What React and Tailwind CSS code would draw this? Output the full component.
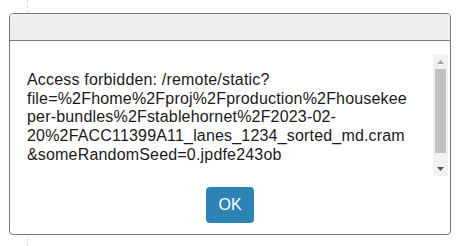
export default function App() {
  const lines = [
    'Access forbidden: /remote/static?',
    'file=%2Fhome%2Fproj%2Fproduction%2Fhousekee',
    'per-bundles%2Fstablehornet%2F2023-02-',
    '20%2FACC11399A11_lanes_1234_sorted_md.cram',
    '&someRandomSeed=0.jpdfe243ob',
  ];

  return (
    <div className="relative w-[465px] h-[246px] bg-white overflow-hidden font-['Liberation_Sans',Arial,sans-serif]">
      {/* dashed guide behind the dialog */}
      <div className="absolute left-[27px] top-0 h-full border-l border-dashed border-[#dddddd]" />

      <div className="relative ml-[9px] mt-[13px] w-[442px] h-[222px] flex flex-col bg-white border border-[#7b7b7b] rounded-[4px]">
        <div className="h-[27px] shrink-0 bg-[#eeeeee] border-b border-[#7b7b7b] rounded-t-[3px]" />

        <div className="mt-[13px] mr-[2px] h-[122px] flex">
          <div className="flex-1 pl-[17px] pt-[17px] text-[16px] tracking-[0.18px] leading-[18.7px] text-[#1a1a1a]">
            {lines.map((line) => (
              <div key={line} className="whitespace-nowrap">{line}</div>
            ))}
          </div>

          <div className="w-[15px] bg-[#f1f1f1] flex flex-col items-center">
            <div className="h-[15px] w-full flex items-center justify-center">
              <svg width="7" height="4" viewBox="0 0 7 4">
                <path d="M3.5 0L7 4H0Z" fill="#a3a3a3" />
              </svg>
            </div>
            <div className="w-[11px] h-[84px] bg-[#c1c1c1]" />
            <div className="flex-1" />
            <div className="h-[15px] w-full flex items-center justify-center">
              <svg width="7" height="4" viewBox="0 0 7 4">
                <path d="M0 0H7L3.5 4Z" fill="#505050" />
              </svg>
            </div>
          </div>
        </div>

        <div className="flex justify-center mt-[11px]">
          <button className="w-[48px] h-[36px] rounded-[4px] bg-[#2d83b4] text-white text-[16px]">
            OK
          </button>
        </div>
      </div>
    </div>
  );
}
